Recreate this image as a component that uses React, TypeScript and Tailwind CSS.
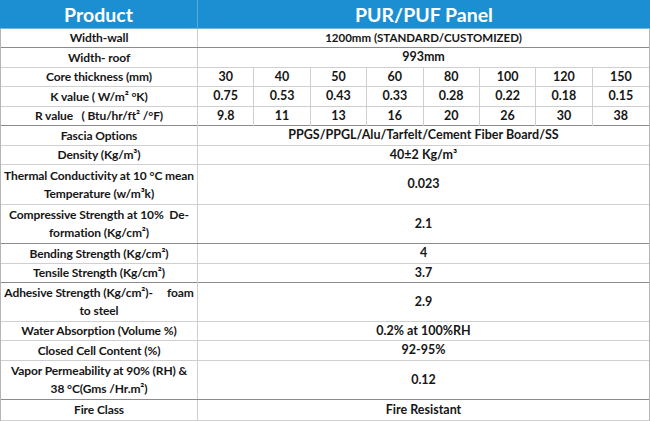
// PUR/PUF panel spec sheet table

type Row = {
  label: string[];
  value?: string;
  cells?: string[];
  h: string;
  dark?: boolean;
};

const rows: Row[] = [
  { label: ['Width-wall'], value: '1200mm (STANDARD/CUSTOMIZED)', h: 'h-[19px]', dark: true },
  { label: ['Width- roof'], value: '993mm', h: 'h-[20px]' },
  { label: ['Core thickness (mm)'], cells: ['30', '40', '50', '60', '80', '100', '120', '150'], h: 'h-[19px]' },
  { label: ['K value ( W/m² °K)'], cells: ['0.75', '0.53', '0.43', '0.33', '0.28', '0.22', '0.18', '0.15'], h: 'h-[20px]' },
  { label: ['R value   ( Btu/hr/ft² /°F)'], cells: ['9.8', '11', '13', '16', '20', '26', '30', '38'], h: 'h-[19px]', dark: true },
  { label: ['Fascia Options'], value: 'PPGS/PPGL/Alu/Tarfelt/Cement Fiber Board/SS', h: 'h-[20px]' },
  { label: ['Density (Kg/m³)'], value: '40±2 Kg/m³', h: 'h-[19px]' },
  { label: ['Thermal Conductivity at 10 °C mean', 'Temperature (w/m³k)'], value: '0.023', h: 'h-[40px]' },
  { label: ['Compressive Strength at 10%  De-', 'formation (Kg/cm²)'], value: '2.1', h: 'h-[39px]', dark: true },
  { label: ['Bending Strength (Kg/cm²)'], value: '4', h: 'h-[20px]' },
  { label: ['Tensile Strength (Kg/cm²)'], value: '3.7', h: 'h-[19px]', dark: true },
  { label: ['Adhesive Strength (Kg/cm²)-     foam', 'to steel'], value: '2.9', h: 'h-[39px]' },
  { label: ['Water Absorption (Volume %)'], value: '0.2% at 100%RH', h: 'h-[19px]' },
  { label: ['Closed Cell Content (%)'], value: '92-95%', h: 'h-[20px]' },
  { label: ['Vapor Permeability at 90% (RH) &', '38 °C(Gms /Hr.m²)'], value: '0.12', h: 'h-[39px]', dark: true },
  { label: ['Fire Class'], value: 'Fire Resistant', h: 'h-[21px]' },
];

export default function App() {
  return (
    <div
      className="w-[650px] h-[421px] overflow-hidden bg-white text-[#161616] font-bold"
      style={{ fontFamily: 'Lato, "Open Sans", sans-serif' }}
    >
      <div className="grid grid-cols-[198px_1fr] h-[29px] bg-[#1b8fd1] text-white text-[19.5px] border-b border-[#7fb6d8]">
        <div className="flex items-center justify-center border-r border-[#5aa6d6]">Product</div>
        <div className="flex items-center justify-center">PUR/PUF Panel</div>
      </div>

      <div className="border-x border-[#b5b5b5]">
        {rows.map((r, i) => (
          <div
            key={i}
            className={`grid grid-cols-[197px_1fr] ${r.h} border-b ${r.dark ? 'border-[#8c8c8c]' : 'border-[#cfcfcf]'}`}
          >
            <div className="flex flex-col items-center justify-center border-r border-[#cfcfcf] text-[12px] leading-[18px] text-center whitespace-pre tracking-[-0.1px]">
              {r.label.map((l, j) => (
                <span key={j}>{l}</span>
              ))}
            </div>
            {r.cells ? (
              <div className="grid grid-cols-8">
                {r.cells.map((c, j) => (
                  <div
                    key={j}
                    className="flex items-center justify-center text-[12.5px] border-r border-[#cfcfcf] last:border-r-0"
                  >
                    {c}
                  </div>
                ))}
              </div>
            ) : (
              <div className={`flex items-center justify-center ${i === 0 ? 'text-[11.5px]' : 'text-[12.5px]'}`}>{r.value}</div>
            )}
          </div>
        ))}
      </div>
    </div>
  );
}
